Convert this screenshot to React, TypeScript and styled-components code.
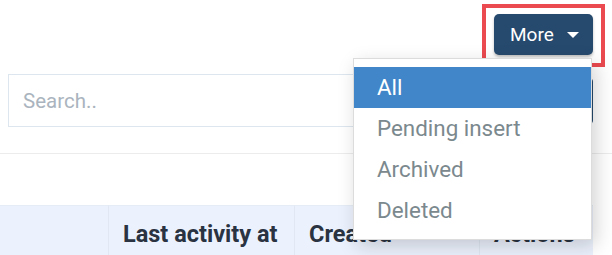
import styled, { createGlobalStyle } from 'styled-components'

const GlobalStyle = createGlobalStyle`
    body {
        margin: 0;
        background: #ffffff;
        font-family: Roboto, "Liberation Sans", sans-serif;
    }
`

const Page = styled.div`
    width: 612px;
    height: 255px;
    overflow: hidden;
    background: #ffffff;
`

const Toolbar = styled.div`
    border-bottom: 1px solid #ececec;
    padding-bottom: 26px;
`

const TopBar = styled.div`
    display: flex;
    justify-content: flex-end;
    padding: 4px 7px 0 0;
`

const Highlight = styled.div`
    border: 4px solid #ea4a50;
    padding: 6px 8px 8px 8px;
`

const Dropdown = styled.div`
    position: relative;
    z-index: 10;
`

const MoreButton = styled.button`
    display: flex;
    align-items: center;
    height: 41px;
    width: 99px;
    padding: 0 14px 0 16px;
    border: none;
    border-radius: 5px;
    background: #264a6e;
    color: #ffffff;
    font-family: Roboto, "Liberation Sans", sans-serif;
    font-size: 19px;
    box-shadow: 0 2px 3px rgba(0, 0, 0, 0.25);
    cursor: pointer;
`

const Caret = styled.span`
    margin-left: 13px;
    width: 0;
    height: 0;
    border-left: 6px solid transparent;
    border-right: 6px solid transparent;
    border-top: 6px solid #ffffff;
`

const Menu = styled.ul`
    position: absolute;
    top: 44px;
    right: 1px;
    width: 239px;
    margin: 0;
    padding: 8px 0;
    list-style: none;
    background: #ffffff;
    border: 1px solid #dcdcdc;
    box-sizing: border-box;
    box-shadow: 4px 6px 18px rgba(0, 0, 0, 0.18);
`

const MenuItem = styled.li<{ $active?: boolean }>`
    display: flex;
    align-items: center;
    height: 41px;
    padding: 0 23px 2px;
    box-sizing: border-box;
    font-size: 22.4px;
    color: ${p => (p.$active ? '#ffffff' : '#7b898e')};
    background: ${p => (p.$active ? '#4186c8' : 'transparent')};
`

const SearchRow = styled.div`
    display: flex;
    align-items: center;
    margin-top: 7px;
    padding: 0 19px 0 8px;
`

const SearchInput = styled.input`
    flex: 1;
    height: 53px;
    box-sizing: border-box;
    padding: 0 14px;
    border: 1px solid #dde5ee;
    font-family: Roboto, "Liberation Sans", sans-serif;
    font-size: 20.5px;
    color: #333;
    outline: none;

    &::placeholder {
        color: #aab4be;
    }
`

const SearchButton = styled.button`
    width: 90px;
    height: 46px;
    border: none;
    border-radius: 4px;
    background: #264a6e;
    color: #fff;
`

const Table = styled.div`
    margin-top: 51px;
    width: 593px;
    display: grid;
    grid-template-columns: 108px 186px 185px 1fr;
`

const HeaderCell = styled.div<{ $first?: boolean }>`
    height: 60px;
    box-sizing: border-box;
    padding: 14px 14px 0;
    background: #ecf2fd;
    border-left: ${p => (p.$first ? 'none' : '1px solid #e1e8f3')};
    border-top: 1px solid #e6ecf5;
    font-size: 23.5px;
    font-weight: 700;
    color: #2a3341;
    white-space: nowrap;
    display: flex;
    align-items: flex-start;
    gap: 9px;
`

const SortIcon = () => (
    <svg width="10" height="8" viewBox="0 0 10 8" style={{ marginTop: 12 }}>
        <path d="M0.5 1 L9.5 1 L5 7 Z" fill="#2a3341" />
    </svg>
)

const items = ['All', 'Pending insert', 'Archived', 'Deleted']

export default function App() {
    return (
        <Page>
            <GlobalStyle />
            <Toolbar>
                <TopBar>
                    <Highlight>
                        <Dropdown>
                            <MoreButton>
                                More
                                <Caret />
                            </MoreButton>
                            <Menu>
                                {items.map((item, i) => (
                                    <MenuItem key={item} $active={i === 0}>
                                        {item}
                                    </MenuItem>
                                ))}
                            </Menu>
                        </Dropdown>
                    </Highlight>
                </TopBar>
                <SearchRow>
                    <SearchInput placeholder="Search.." />
                    <SearchButton>Search</SearchButton>
                </SearchRow>
            </Toolbar>
            <Table>
                <HeaderCell $first />
                <HeaderCell>Last activity at</HeaderCell>
                <HeaderCell>
                    Created
                    <SortIcon />
                </HeaderCell>
                <HeaderCell>Actions</HeaderCell>
            </Table>
        </Page>
    )
}
